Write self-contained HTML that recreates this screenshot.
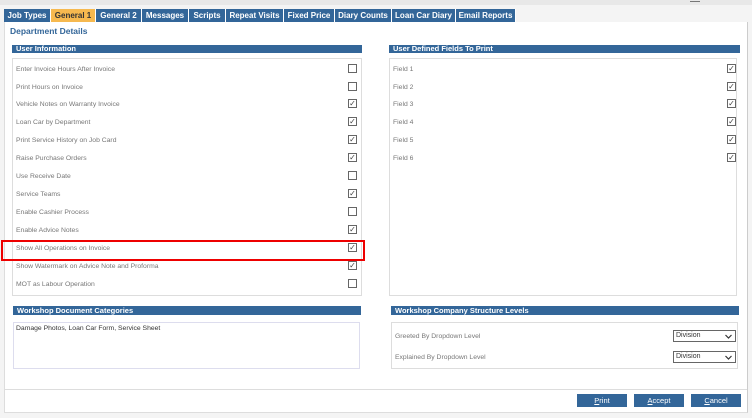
<!DOCTYPE html>
<html><head><style>
*{box-sizing:border-box;margin:0;padding:0}
body{width:752px;height:418px;background:#f4f4f4;font-family:"Liberation Sans",Verdana,sans-serif;position:relative;overflow:hidden}
.a{position:absolute}
.tab{position:absolute;top:9px;height:13px;background:#336699;color:#fff;font-size:8px;font-weight:bold;text-align:center;line-height:13px;border-right:1px solid #fff}
.hdr{position:absolute;height:8px;background:#336699;color:#fff;font-size:7.5px;font-weight:bold;line-height:8px;padding-left:4px}
.pan{position:absolute;border:1px solid #ddd;background:#fff}
.lbl{position:absolute;font-size:6.8px;color:#777}
.cb{position:absolute;width:9px;height:9px;border:1px solid #666;background:#fff;font-size:8px;line-height:7px;text-align:center;color:#444}
.btn{position:absolute;top:394px;width:50px;height:13px;background:#336699;color:#fff;font-size:7.5px;text-align:center;line-height:13px}
.sel{position:absolute;left:673px;width:63px;height:12px;border:1px solid #666;background:#fff;font-size:7px;line-height:10px;padding-left:2px;color:#333}
.sel svg{position:absolute;right:3px;top:3px}
</style></head><body>
<div class="a" style="left:0;top:0;width:752px;height:5px;background:#e8e8e8"></div>
<div class="a" style="left:690px;top:1px;width:10px;height:1px;background:#777"></div>
<div class="a" style="left:4px;top:22px;width:744px;height:391px;background:#fff;border-left:1px solid #ddd;border-right:1px solid #ccc;border-bottom:1px solid #ddd"></div>
<div class="tab" style="left:4px;width:47px">Job Types</div>
<div class="tab" style="left:51px;width:45px;background:#f6b94f;color:#333">General 1</div>
<div class="tab" style="left:96px;width:46px">General 2</div>
<div class="tab" style="left:142px;width:47px">Messages</div>
<div class="tab" style="left:189px;width:37px">Scripts</div>
<div class="tab" style="left:226px;width:58px">Repeat Visits</div>
<div class="tab" style="left:284px;width:51px">Fixed Price</div>
<div class="tab" style="left:335px;width:57px">Diary Counts</div>
<div class="tab" style="left:392px;width:64px">Loan Car Diary</div>
<div class="tab" style="left:456px;width:60px">Email Reports</div>
<div class="a" style="left:10px;top:26px;font-size:8.5px;font-weight:bold;color:#336699">Department Details</div>

<div class="hdr" style="left:12px;top:45px;width:350px">User Information</div>
<div class="pan" style="left:12px;top:58px;width:350px;height:238px"></div>
<div class="hdr" style="left:389px;top:45px;width:351px">User Defined Fields To Print</div>
<div class="pan" style="left:389px;top:58px;width:348px;height:238px"></div>

<div class="a" style="left:1px;top:240px;width:364px;height:21px;border:2px solid #e00"></div>

<div class="lbl" style="left:16px;top:66px">Enter Invoice Hours After Invoice</div><div class="cb" style="left:348px;top:64px"></div>
<div class="lbl" style="left:16px;top:84px">Print Hours on Invoice</div><div class="cb" style="left:348px;top:82px"></div>
<div class="lbl" style="left:16px;top:101px">Vehicle Notes on Warranty Invoice</div><div class="cb" style="left:348px;top:99px">✓</div>
<div class="lbl" style="left:16px;top:119px">Loan Car by Department</div><div class="cb" style="left:348px;top:117px">✓</div>
<div class="lbl" style="left:16px;top:137px">Print Service History on Job Card</div><div class="cb" style="left:348px;top:135px">✓</div>
<div class="lbl" style="left:16px;top:155px">Raise Purchase Orders</div><div class="cb" style="left:348px;top:153px">✓</div>
<div class="lbl" style="left:16px;top:173px">Use Receive Date</div><div class="cb" style="left:348px;top:171px"></div>
<div class="lbl" style="left:16px;top:191px">Service Teams</div><div class="cb" style="left:348px;top:189px">✓</div>
<div class="lbl" style="left:16px;top:209px">Enable Cashier Process</div><div class="cb" style="left:348px;top:207px"></div>
<div class="lbl" style="left:16px;top:227px">Enable Advice Notes</div><div class="cb" style="left:348px;top:225px">✓</div>
<div class="lbl" style="left:16px;top:245px">Show All Operations on Invoice</div><div class="cb" style="left:348px;top:243px">✓</div>
<div class="lbl" style="left:16px;top:263px">Show Watermark on Advice Note and Proforma</div><div class="cb" style="left:348px;top:261px">✓</div>
<div class="lbl" style="left:16px;top:281px">MOT as Labour Operation</div><div class="cb" style="left:348px;top:279px"></div>

<div class="lbl" style="left:393px;top:66px">Field 1</div><div class="cb" style="left:727px;top:64px">✓</div>
<div class="lbl" style="left:393px;top:84px">Field 2</div><div class="cb" style="left:727px;top:82px">✓</div>
<div class="lbl" style="left:393px;top:101px">Field 3</div><div class="cb" style="left:727px;top:99px">✓</div>
<div class="lbl" style="left:393px;top:119px">Field 4</div><div class="cb" style="left:727px;top:117px">✓</div>
<div class="lbl" style="left:393px;top:137px">Field 5</div><div class="cb" style="left:727px;top:135px">✓</div>
<div class="lbl" style="left:393px;top:155px">Field 6</div><div class="cb" style="left:727px;top:153px">✓</div>

<div class="hdr" style="left:13px;top:306px;width:348px;height:9px;line-height:9px">Workshop Document Categories</div>
<div class="pan" style="left:13px;top:322px;width:347px;height:47px;border-color:#dde"></div>
<div class="a" style="left:16px;top:325px;font-size:6.8px;color:#333">Damage Photos, Loan Car Form, Service Sheet</div>

<div class="hdr" style="left:391px;top:306px;width:348px;height:9px;line-height:9px">Workshop Company Structure Levels</div>
<div class="pan" style="left:391px;top:322px;width:347px;height:47px"></div>
<div class="lbl" style="left:395px;top:333px">Greeted By Dropdown Level</div>
<div class="lbl" style="left:395px;top:354px">Explained By Dropdown Level</div>
<div class="sel" style="top:330px">Division<svg width="7" height="5" viewBox="0 0 7 5"><path d="M0.5 1 L3.5 4 L6.5 1" fill="none" stroke="#333" stroke-width="1.2"/></svg></div>
<div class="sel" style="top:351px">Division<svg width="7" height="5" viewBox="0 0 7 5"><path d="M0.5 1 L3.5 4 L6.5 1" fill="none" stroke="#333" stroke-width="1.2"/></svg></div>

<div class="a" style="left:5px;top:389px;width:742px;height:1px;background:#ddd"></div>
<div class="btn" style="left:577px"><u>P</u>rint</div>
<div class="btn" style="left:634px"><u>A</u>ccept</div>
<div class="btn" style="left:691px"><u>C</u>ancel</div>
</body></html>
